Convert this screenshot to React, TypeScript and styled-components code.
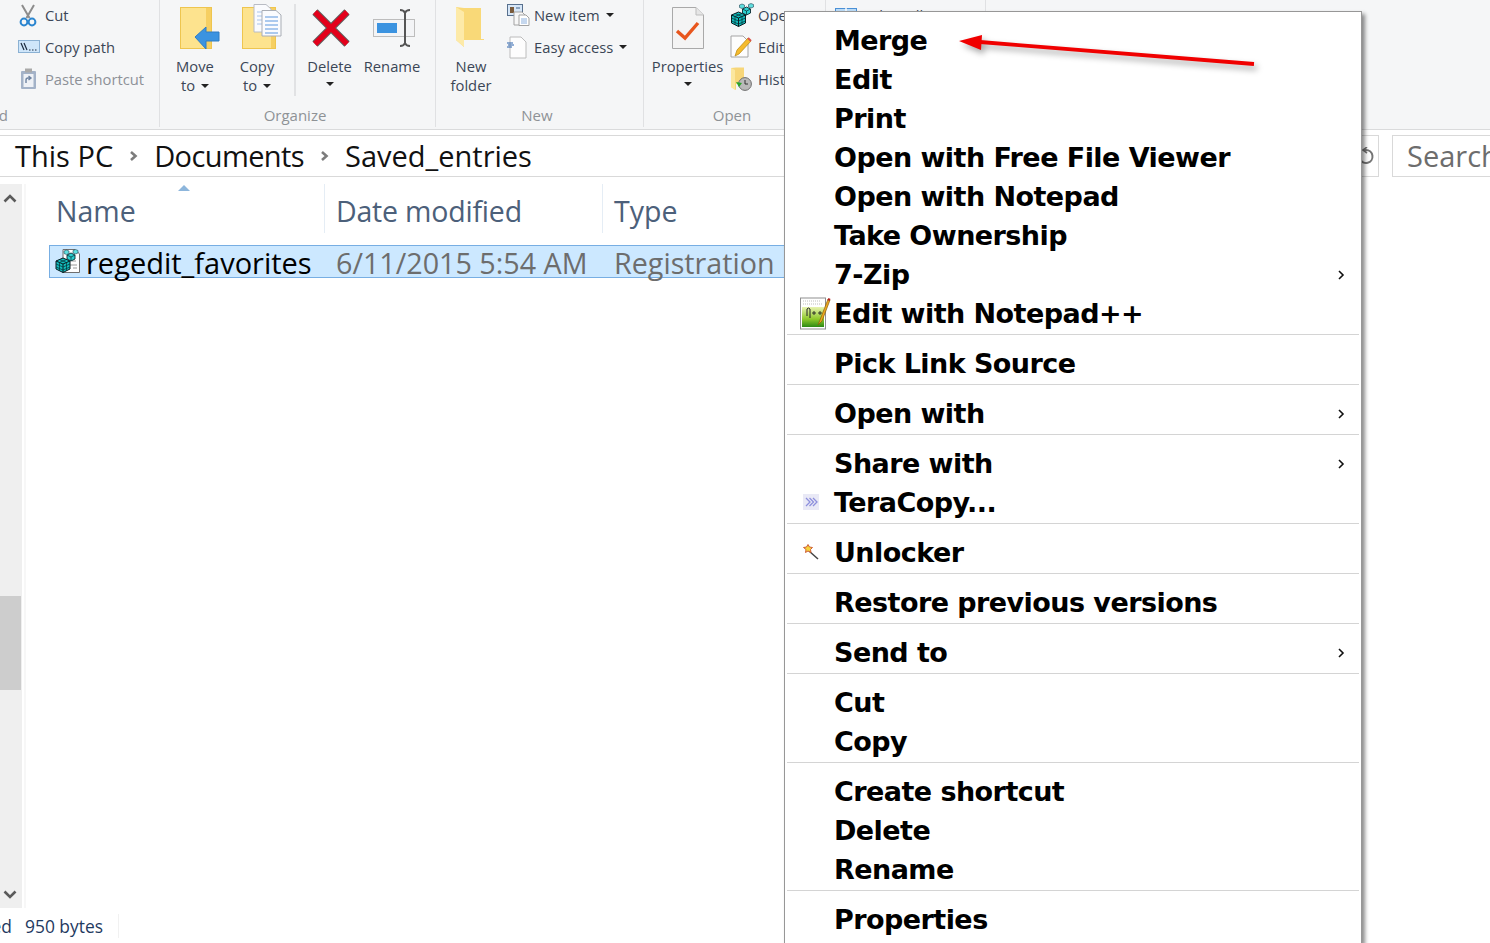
import React from 'react';
import styled, { createGlobalStyle } from 'styled-components';

const GlobalStyle = createGlobalStyle`
  html, body {
    margin: 0;
    padding: 0;
    background: #fff;
    overflow: hidden;
  }
  * {
    box-sizing: border-box;
  }
`;

const Window = styled.div`
  position: relative;
  width: 1490px;
  height: 943px;
  display: flex;
  flex-direction: column;
  overflow: hidden;
  background: #fff;
  font-family: 'Open Sans', 'Noto Sans', sans-serif;
`;

/* ribbon */

const Ribbon = styled.div`
  height: 130px;
  flex: none;
  display: flex;
  background: #f5f6f7;
  border-bottom: 1px solid #dadbdc;
  font-size: 14.75px;
  color: #3b4656;
`;

const Group = styled.div<{ $width: number }>`
  width: ${(p) => p.$width}px;
  height: 127px;
  flex: none;
  display: flex;
  flex-direction: column;
  border-right: 1px solid #e0e1e3;
`;

const GroupBody = styled.div<{ $pad?: number }>`
  height: 105px;
  display: flex;
  padding-left: ${(p) => p.$pad ?? 0}px;
`;

const GroupLabel = styled.div`
  height: 22px;
  display: flex;
  justify-content: center;
  padding-right: 5px;
  overflow: hidden;
  white-space: nowrap;
  color: #8e9296;
  font-size: 15px;
  line-height: 20px;
`;

const ClippedLabel = styled(GroupLabel)`
  justify-content: flex-end;
  padding-right: 151px;
`;

const LargeButton = styled.div<{ $width: number }>`
  width: ${(p) => p.$width}px;
  flex: none;
  display: flex;
  flex-direction: column;
  align-items: center;
  line-height: 19px;
  text-align: center;
`;

const LargeIcon = styled.div<{ $top: number; $shift?: number }>`
  height: 57px;
  display: flex;
  align-items: flex-start;
  padding-top: ${(p) => p.$top}px;
  margin-left: ${(p) => (p.$shift ?? 0) * 2}px;
  svg {
    display: block;
  }
`;

const Caret = styled.span`
  display: inline-block;
  width: 0;
  height: 0;
  margin-left: 6px;
  vertical-align: 3px;
  border-left: 4px solid transparent;
  border-right: 4px solid transparent;
  border-top: 4px solid #222;
`;

const BlockCaret = styled(Caret)`
  display: block;
  margin: 6px auto 0;
`;

const VSep = styled.div`
  width: 2px;
  height: 92px;
  margin: 4px 6px 0;
  flex: none;
  background: #e1e2e4;
`;

const SmallList = styled.div<{ $gap?: number }>`
  display: flex;
  flex-direction: column;
  margin: -1px 0 0 ${(p) => p.$gap ?? 0}px;
`;

const SmallRow = styled.div<{ $muted?: boolean }>`
  height: 32px;
  display: flex;
  align-items: center;
  white-space: nowrap;
  color: ${(p) => (p.$muted ? '#8d9197' : 'inherit')};
`;

const SmallIcon = styled.div<{ $width: number }>`
  width: ${(p) => p.$width}px;
  flex: none;
  display: flex;
  align-items: center;
  svg {
    display: block;
  }
`;

/* address bar */

const AddressRow = styled.div`
  height: 42px;
  margin-top: 5px;
  flex: none;
  display: flex;
  gap: 13px;
`;

const Breadcrumb = styled.div`
  width: 1379px;
  flex: none;
  display: flex;
  align-items: center;
  padding: 0 4px 1px 15px;
  border: 1px solid #d9d9d9;
  border-left: none;
  font-size: 29px;
  color: #111;
`;

const Crumb = styled.span<{ $tight?: boolean }>`
  white-space: nowrap;
  letter-spacing: ${(p) => (p.$tight ? '-0.6px' : '0')};
`;

const CrumbChevron = styled.svg`
  width: 9px;
  height: 14px;
  margin: 0 16px;
  flex: none;
`;

const RefreshGlyph = styled.svg`
  width: 16px;
  height: 18px;
  margin-left: auto;
  flex: none;
`;

const SearchBox = styled.div`
  flex: 1;
  display: flex;
  align-items: center;
  padding: 0 0 1px 14px;
  overflow: hidden;
  white-space: nowrap;
  border: 1px solid #d9d9d9;
  border-right: none;
  font-size: 29px;
  color: #6d6d6d;
`;

/* file list */

const Body = styled.div`
  flex: 1;
  min-height: 0;
  margin-top: 7px;
  display: flex;
`;

const Scrollbar = styled.div`
  width: 22px;
  flex: none;
  display: flex;
  flex-direction: column;
  background: #efefef;
`;

const ScrollButton = styled.div`
  height: 28px;
  flex: none;
  display: flex;
  align-items: center;
  justify-content: center;
  padding-right: 2px;
`;

const ScrollTrack = styled.div`
  flex: 1;
`;

const ScrollThumb = styled.div<{ $top: number; $height: number }>`
  width: 21px;
  height: ${(p) => p.$height}px;
  margin-top: ${(p) => p.$top}px;
  background: #cdcdcd;
`;

const Gutter = styled.div`
  width: 4px;
  flex: none;
  border-left: 2px solid #fff;
  background: #f7f7f7;
`;

const FileList = styled.div`
  flex: 1;
  padding-left: 23px;
`;

const columns = `276px 278px 1fr`;

const HeaderRow = styled.div`
  height: 48px;
  display: grid;
  grid-template-columns: ${columns};
  font-size: 28.5px;
  color: #4c607a;
`;

const HeaderCell = styled.div<{ $pad: number; $divider?: boolean; $tight?: boolean }>`
  position: relative;
  padding: 5px 0 0 ${(p) => p.$pad}px;
  line-height: 44px;
  white-space: nowrap;
  letter-spacing: ${(p) => (p.$tight ? '-0.2px' : '0')};
  border-right: ${(p) => (p.$divider ? '1px solid #e5edf5' : 'none')};
`;

const SortMark = styled.svg`
  position: absolute;
  top: 1px;
  left: 129px;
  width: 12px;
  height: 6px;
`;

const FileRow = styled.div`
  width: 860px;
  height: 33px;
  margin-top: 13px;
  padding-top: 2px;
  display: grid;
  grid-template-columns: ${columns};
  align-items: center;
  background: #cce8ff;
  border: 1px solid #77aee3;
  font-size: 29px;
  line-height: 29px;
  white-space: nowrap;
  color: #6d6d6d;
`;

const FileName = styled.div`
  display: flex;
  align-items: center;
  gap: 6px;
  padding-left: 5px;
  color: #000;
  svg {
    margin-top: -4px;
  }
`;

const FileCell = styled.div`
  padding-left: 10px;
  font-size: 28.7px;
`;

const StatusBar = styled.div`
  height: 35px;
  flex: none;
  display: flex;
  align-items: center;
  font-size: 17.4px;
  color: #1f3a5f;
`;

const StatusClip = styled.span`
  width: 12px;
  overflow: hidden;
  direction: rtl;
`;

const StatusSize = styled.span`
  width: 107px;
  padding-left: 13px;
  border-right: 1px solid #f1f1f1;
`;

/* context menu */

const Menu = styled.div`
  position: absolute;
  left: 784px;
  top: 11px;
  width: 578px;
  height: 932px;
  padding: 9px 2px 0 1px;
  background: #fff;
  border: 1px solid #979797;
  border-bottom: none;
  box-shadow: 3px 3px 4px rgba(0, 0, 0, 0.45);
  font-family: 'DejaVu Sans', Verdana, sans-serif;
  font-weight: 700;
  font-size: 27px;
  letter-spacing: -0.55px;
  color: #000;
`;

const MenuRow = styled.div`
  height: 39px;
  display: flex;
  align-items: center;
  padding-right: 14px;
  white-space: nowrap;
`;

const MenuIcon = styled.div`
  width: 48px;
  flex: none;
  display: flex;
  align-items: center;
  padding-left: 14px;
  svg {
    display: block;
  }
`;

const MenuGlyph = styled.svg`
  width: 16px;
  height: 16px;
  margin: -2px 0 0 3px;
`;

const MenuChevron = styled.svg`
  width: 8px;
  height: 10px;
  margin-left: auto;
  flex: none;
`;

const MenuSeparator = styled.div`
  height: 1px;
  margin: 1px 0 9px 1px;
  background: #d4d4d4;
`;

const RedArrow = styled.svg`
  position: absolute;
  left: 950px;
  top: 28px;
  width: 320px;
  height: 50px;
  filter: drop-shadow(3px 4px 3px rgba(0, 0, 0, 0.35));
`;

/* icons */

const Scissors = () => (
  <svg width="19" height="23" viewBox="-2 0 19 23">
    <path d="M2 1 L9.5 14 M14 1 L6.5 14" stroke="#8c8c8c" strokeWidth="2" fill="none" />
    <circle cx="4" cy="18" r="3.4" stroke="#2c86d0" strokeWidth="2" fill="none" />
    <circle cx="12" cy="18" r="3.4" stroke="#2c86d0" strokeWidth="2" fill="none" />
  </svg>
);

const CopyPathIcon = () => (
  <svg width="22" height="14" viewBox="0 0 22 14">
    <rect x="0.5" y="0.5" width="21" height="12" fill="#cfe6fa" stroke="#8bb1d3" />
    <path d="M3 3 L6 10 M6 3 L9 10" stroke="#1c2b3f" strokeWidth="1.2" />
    <path d="M11 10 h1.5 M14 10 h1.5 M17 10 h1.5" stroke="#1c2b3f" strokeWidth="1.2" />
  </svg>
);

const PasteIcon = () => (
  <svg width="19" height="22" viewBox="-2 0 19 22">
    <rect x="1" y="3" width="15" height="18" rx="1" fill="#a3b2c8" />
    <rect x="5" y="0.5" width="7" height="4" fill="#a9a9a9" />
    <rect x="3.5" y="6" width="10" height="13" fill="#eef1f6" />
    <path d="M6 15 V12 q0 -2 2 -2 H10 M8.5 8 L11 10 L8.5 12" stroke="#6f84a2" strokeWidth="1.4" fill="none" />
  </svg>
);

const MoveToIcon = () => (
  <svg width="40" height="43" viewBox="0 0 40 43">
    <rect x="0.5" y="0.5" width="31" height="41" fill="#fde38e" stroke="#eec54f" />
    <rect x="26" y="1" width="5" height="40" fill="#f6cf62" />
    <path d="M15 30 L26 20 V25 H39 V34 H26 V42 Z" fill="#3b93e0" stroke="#2f7dc4" />
  </svg>
);

const CopyToIcon = () => (
  <svg width="40" height="46" viewBox="0 0 40 46">
    <rect x="0.5" y="3.5" width="33" height="41" fill="#fde38e" stroke="#eec54f" />
    <rect x="29" y="4" width="4" height="40" fill="#f6cf62" />
    <path d="M12 0.5 H24 L29 5 V28 H12 Z" fill="#fafbfe" stroke="#b9bcc4" />
    <path d="M15 8 H26 M15 12 H26 M15 16 H26 M15 20 H26" stroke="#a8c4ea" />
    <path d="M20 6.5 H34 L39 11 V32 H20 Z" fill="#fafbfe" stroke="#a9adb5" />
    <path d="M23 13 H36 M23 17 H36 M23 21 H36 M23 25 H36 M23 29 H36" stroke="#5d97de" />
  </svg>
);

const DeleteIcon = () => (
  <svg width="38" height="38" viewBox="0 0 38 38">
    <path d="M3 3 L35 35 M35 3 L3 35" stroke="#5f5f5f" strokeWidth="7.5" />
    <path d="M3 3 L35 35 M35 3 L3 35" stroke="#e3001b" strokeWidth="5.5" />
  </svg>
);

const RenameIcon = () => (
  <svg width="42" height="38" viewBox="0 0 42 38">
    <rect x="0.5" y="10.5" width="41" height="17" fill="#f3f4f6" stroke="#bdbdbd" />
    <rect x="4" y="14" width="20" height="10" fill="#3b93e0" />
    <path d="M27 1 q4 0 5 3 V34 q-1 3 -5 3 M37 1 q-4 0 -5 3 M37 37 q-4 0 -5 -3" stroke="#555" strokeWidth="2" fill="none" />
  </svg>
);

const NewFolderIcon = () => (
  <svg width="28" height="40" viewBox="0 0 28 40">
    <path d="M0 0 L8 1 H25 V32 H28 V33 H8 V40 L0 33 Z" fill="#f9d978" />
    <path d="M0 0 L8 5 V40 L0 33 Z" fill="#fdeaa8" />
  </svg>
);

const NewItemIcon = () => (
  <svg width="23" height="22" viewBox="0 0 23 22">
    <rect x="0.5" y="0.5" width="15" height="11" fill="#d6e6f7" stroke="#58708e" />
    <rect x="3" y="3" width="4" height="6" fill="#7a5b3c" />
    <path d="M9 4 H13" stroke="#40628a" />
    <path d="M7 8 H15 L18 11 V21 H7 Z" fill="#f7f7f7" stroke="#a3a3a3" />
    <path d="M12 11 H19 L22 14 V21.5 H12 Z" fill="#fff" stroke="#a3a3a3" />
    <path d="M14 15 H20 M14 17 H20 M14 19 H20" stroke="#8cb0de" />
  </svg>
);

const EasyAccessIcon = () => (
  <svg width="20" height="23" viewBox="0 0 20 23">
    <path d="M3 1 H14 L19 6 V22 H3 Z" fill="#fdfdfd" stroke="#bcbcbc" />
    <path d="M0 7 H6 M1 9 H7 M0 11 H5" stroke="#2a62ad" />
  </svg>
);

const PropertiesIcon = () => (
  <svg width="32" height="42" viewBox="0 0 32 42">
    <path d="M0.5 0.5 H24 L31.5 8 V41.5 H0.5 Z" fill="#f4f4f4" stroke="#a9a9a9" />
    <path d="M24 0.5 V8 H31.5" fill="#e6e6e6" stroke="#bdbdbd" />
    <path d="M5 24 L13 31 L26 16" stroke="#e8561d" strokeWidth="3.4" fill="none" />
  </svg>
);

const cubeArt = (
  <>
    <path d="M1 12 L8 9 L15 12 V20 L8 23.5 L1 20 Z" fill="#12bcbc" stroke="#0a1a1f" strokeWidth="1" />
    <path d="M1 12 L8 15 L15 12 M8 15 V23.5" stroke="#0a1a1f" strokeWidth="1" fill="none" />
    <path d="M1 15 L8 18 L15 15 M1 18 L8 21 L15 18 M4.5 13.5 V22 M11.5 13.5 V22 M4.5 10.5 L11.5 13.5 M11.5 10.5 L4.5 13.5" stroke="#063b40" strokeWidth="0.8" fill="none" />
    <path d="M12 6 L16 4 L20 6 V10 L16 12 L12 10 Z" fill="#2bcfcf" stroke="#0a2a30" strokeWidth="0.9" />
    <path d="M12 6 L16 8 L20 6 M16 8 V12" stroke="#0a2a30" strokeWidth="0.7" fill="none" />
    <path d="M9 2 L11.5 1 L14 2 V4.5 L11.5 5.5 L9 4.5 Z" fill="#5fdede" stroke="#245" strokeWidth="0.6" />
    <path d="M18 1.5 L20.5 0.5 L23 1.5 V4 L20.5 5 L18 4 Z" fill="#5fdede" stroke="#245" strokeWidth="0.6" />
  </>
);

const RegistryCubes = () => (
  <svg width="25" height="24" viewBox="0 0 24 24">{cubeArt}</svg>
);

const RegFileIcon = () => (
  <svg width="25" height="24" viewBox="0 0 25 24">
    <path d="M8 0.5 H20 L24.5 5 V23.5 H8 Z" fill="#fff" stroke="#6f6f6f" />
    <path d="M17 12 H21 M15 16 H22 M18 19 H22" stroke="#9a9a9a" />
    {cubeArt}
  </svg>
);

const EditPageIcon = () => (
  <svg width="22" height="24" viewBox="0 0 22 24">
    <path d="M1 1 H13 L18 6 V22 H1 Z" fill="#fdfdfd" stroke="#a5a5a5" />
    <path d="M5 21 L7 15 L18 3 L21 6 L9 19 Z" fill="#f5bb2d" stroke="#b8860b" strokeWidth="0.7" />
    <path d="M18 3 L21 6" stroke="#d9534f" strokeWidth="2" />
  </svg>
);

const HistoryIcon = () => (
  <svg width="22" height="24" viewBox="0 0 22 24">
    <path d="M1 1 L6 0.5 H14 V17 H6 V23 L1 20 Z" fill="#f7d679" />
    <path d="M1 1 L5 3 V23 L1 20 Z" fill="#fbe79f" />
    <circle cx="15" cy="17" r="6.4" fill="#b9b9b9" stroke="#6e6e6e" />
    <path d="M15 13 V17 H18" stroke="#333" fill="none" />
    <path d="M6 15 L9 20 L12 16 Z" fill="#2aa52a" />
  </svg>
);

const SelectAllIcon = () => (
  <svg width="22" height="14" viewBox="0 0 22 14">
    <rect x="0.5" y="0.5" width="21" height="13" fill="#bcdcf7" stroke="#4a90d6" />
    <path d="M11 0 V14" stroke="#fff" strokeWidth="1.4" />
  </svg>
);

const NotepadPlusIcon = () => (
  <svg width="31" height="33" viewBox="0 0 31 33">
    <defs>
      <linearGradient id="nppGreen" x1="0" y1="0" x2="0" y2="1">
        <stop offset="0" stopColor="#e8f3b0" />
        <stop offset="0.6" stopColor="#8fc92b" />
        <stop offset="1" stopColor="#2c8a14" />
      </linearGradient>
    </defs>
    <rect x="0.5" y="1" width="25" height="31" fill="#fff" stroke="#8f8f8f" />
    <path d="M3 4 H21 M3 7 H23" stroke="#bdbdbd" strokeDasharray="1 1" />
    <rect x="2" y="10" width="22" height="20" fill="url(#nppGreen)" />
    <path d="M7 19 V12 q1.5 -2 3 0 V21" stroke="#222" strokeWidth="1" fill="none" />
    <path d="M12 16 h4 M14 14 v4 M18 16 h4 M20 14 v4" stroke="#222" strokeWidth="0.9" />
    <path d="M18 28 L20 23 L28 2 L30 3 L22 24 Z" fill="#eda81f" stroke="#8a5d0a" strokeWidth="0.7" />
    <path d="M28 2 L30 3" stroke="#b32020" strokeWidth="2.4" />
  </svg>
);

const TeraCopyIcon = () => (
  <MenuGlyph viewBox="0 0 16 16">
    <rect width="16" height="16" fill="#e9e9f6" />
    <path d="M3 4 L7 8 L3 12 M6.5 4 L10.5 8 L6.5 12 M10 4 L14 8 L10 12" stroke="#8d8fdc" strokeWidth="1.3" fill="none" />
  </MenuGlyph>
);

const UnlockerIcon = () => (
  <MenuGlyph viewBox="0 0 16 16">
    <path d="M6 7 L15 15" stroke="#444" strokeWidth="1.5" />
    <path d="M5 0.5 L6.5 3 L9.5 3.5 L7.5 5.5 L8 8.5 L5 7 L2.5 8.5 L3 5.5 L0.5 3.5 L3.5 3 Z" fill="#f6d33c" stroke="#c8502c" strokeWidth="0.9" />
  </MenuGlyph>
);

const Chevron = ({ up }: { up?: boolean }) => (
  <svg width="14" height="9" viewBox="0 0 14 9">
    <path d={up ? 'M1.5 7.5 L7 2 L12.5 7.5' : 'M1.5 1.5 L7 7 L12.5 1.5'} stroke="#5a5a5a" strokeWidth="2.6" fill="none" />
  </svg>
);

const SubmenuChevron = () => (
  <MenuChevron viewBox="0 0 8 10">
    <path d="M2 1 L6 5 L2 9" stroke="#111" strokeWidth="1.6" fill="none" />
  </MenuChevron>
);

const BreadcrumbArrow = () => (
  <CrumbChevron viewBox="0 0 9 14">
    <path d="M2 3 L6.5 7 L2 11" stroke="#7c7c7c" strokeWidth="2.6" fill="none" />
  </CrumbChevron>
);

type MenuEntry = {
  label: string;
  icon?: React.ReactNode;
  submenu?: boolean;
};

const menuSections: MenuEntry[][] = [
  [
    { label: 'Merge' },
    { label: 'Edit' },
    { label: 'Print' },
    { label: 'Open with Free File Viewer' },
    { label: 'Open with Notepad' },
    { label: 'Take Ownership' },
    { label: '7-Zip', submenu: true },
    { label: 'Edit with Notepad++', icon: <NotepadPlusIcon /> },
  ],
  [{ label: 'Pick Link Source' }],
  [{ label: 'Open with', submenu: true }],
  [
    { label: 'Share with', submenu: true },
    { label: 'TeraCopy...', icon: <TeraCopyIcon /> },
  ],
  [{ label: 'Unlocker', icon: <UnlockerIcon /> }],
  [{ label: 'Restore previous versions' }],
  [{ label: 'Send to', submenu: true }],
  [{ label: 'Cut' }, { label: 'Copy' }],
  [{ label: 'Create shortcut' }, { label: 'Delete' }, { label: 'Rename' }],
  [{ label: 'Properties' }],
];

const App: React.FC = () => {
  return (
    <Window>
      <GlobalStyle />
      <Ribbon>
        <Group $width={160}>
          <GroupBody $pad={18}>
            <SmallList>
              <SmallRow>
                <SmallIcon $width={27}><Scissors /></SmallIcon>Cut
              </SmallRow>
              <SmallRow>
                <SmallIcon $width={27}><CopyPathIcon /></SmallIcon>Copy path
              </SmallRow>
              <SmallRow $muted>
                <SmallIcon $width={27}><PasteIcon /></SmallIcon>Paste shortcut
              </SmallRow>
            </SmallList>
          </GroupBody>
          <ClippedLabel>Clipboard</ClippedLabel>
        </Group>

        <Group $width={276}>
          <GroupBody $pad={4}>
            <LargeButton $width={62}>
              <LargeIcon $top={7} $shift={5}><MoveToIcon /></LargeIcon>
              <span>Move</span>
              <span>to<Caret /></span>
            </LargeButton>
            <LargeButton $width={62}>
              <LargeIcon $top={4} $shift={5}><CopyToIcon /></LargeIcon>
              <span>Copy</span>
              <span>to<Caret /></span>
            </LargeButton>
            <VSep />
            <LargeButton $width={55}>
              <LargeIcon $top={9} $shift={1}><DeleteIcon /></LargeIcon>
              <span>Delete</span>
              <BlockCaret />
            </LargeButton>
            <LargeButton $width={70}>
              <LargeIcon $top={9} $shift={2}><RenameIcon /></LargeIcon>
              <span>Rename</span>
            </LargeButton>
          </GroupBody>
          <GroupLabel>Organize</GroupLabel>
        </Group>

        <Group $width={208}>
          <GroupBody $pad={5}>
            <LargeButton $width={60}>
              <LargeIcon $top={7} $shift={-1}><NewFolderIcon /></LargeIcon>
              <span>New</span>
              <span>folder</span>
            </LargeButton>
            <SmallList $gap={6}>
              <SmallRow>
                <SmallIcon $width={27}><NewItemIcon /></SmallIcon>New item<Caret />
              </SmallRow>
              <SmallRow>
                <SmallIcon $width={27}><EasyAccessIcon /></SmallIcon>Easy access<Caret />
              </SmallRow>
            </SmallList>
          </GroupBody>
          <GroupLabel>New</GroupLabel>
        </Group>

        <Group $width={182}>
          <GroupBody $pad={6}>
            <LargeButton $width={75}>
              <LargeIcon $top={7}><PropertiesIcon /></LargeIcon>
              <span>Properties</span>
              <BlockCaret />
            </LargeButton>
            <SmallList $gap={5}>
              <SmallRow>
                <SmallIcon $width={28}><RegistryCubes /></SmallIcon>Open
              </SmallRow>
              <SmallRow>
                <SmallIcon $width={28}><EditPageIcon /></SmallIcon>Edit
              </SmallRow>
              <SmallRow>
                <SmallIcon $width={28}><HistoryIcon /></SmallIcon>History
              </SmallRow>
            </SmallList>
          </GroupBody>
          <GroupLabel>Open</GroupLabel>
        </Group>

        <Group $width={160}>
          <GroupBody $pad={9}>
            <SmallList>
              <SmallRow>
                <SmallIcon $width={28}><SelectAllIcon /></SmallIcon>Select all
              </SmallRow>
            </SmallList>
          </GroupBody>
        </Group>
      </Ribbon>

      <AddressRow>
        <Breadcrumb>
          <Crumb>This PC</Crumb>
          <BreadcrumbArrow />
          <Crumb $tight>Documents</Crumb>
          <BreadcrumbArrow />
          <Crumb>Saved_entries</Crumb>
          <RefreshGlyph viewBox="0 0 16 18">
            <path d="M6 3 H8 A6.5 6.5 0 1 1 2 12" stroke="#757575" strokeWidth="2" fill="none" />
            <path d="M9 0 L5 3 L9 6" stroke="#757575" strokeWidth="1.6" fill="none" />
          </RefreshGlyph>
        </Breadcrumb>
        <SearchBox>Search Saved_entries</SearchBox>
      </AddressRow>

      <Body>
        <Scrollbar>
          <ScrollButton><Chevron up /></ScrollButton>
          <ScrollTrack>
            <ScrollThumb $top={384} $height={94} />
          </ScrollTrack>
          <ScrollButton><Chevron /></ScrollButton>
        </Scrollbar>
        <Gutter />
        <FileList>
          <HeaderRow>
            <HeaderCell $pad={7} $divider>
              Name
              <SortMark viewBox="0 0 12 6">
                <path d="M0 6 L6 0 L12 6 Z" fill="#8db6dc" />
              </SortMark>
            </HeaderCell>
            <HeaderCell $pad={11} $divider $tight>Date modified</HeaderCell>
            <HeaderCell $pad={11}>Type</HeaderCell>
          </HeaderRow>
          <FileRow>
            <FileName>
              <RegFileIcon />
              regedit_favorites
            </FileName>
            <FileCell>6/11/2015 5:54 AM</FileCell>
            <FileCell>Registration Entries</FileCell>
          </FileRow>
        </FileList>
      </Body>

      <StatusBar>
        <StatusClip>selected</StatusClip>
        <StatusSize>950 bytes</StatusSize>
      </StatusBar>

      <Menu>
        {menuSections.map((section, i) => (
          <React.Fragment key={i}>
            {i > 0 && <MenuSeparator />}
            {section.map((item) => (
              <MenuRow key={item.label}>
                <MenuIcon>{item.icon}</MenuIcon>
                {item.label}
                {item.submenu && <SubmenuChevron />}
              </MenuRow>
            ))}
          </React.Fragment>
        ))}
      </Menu>

      <RedArrow viewBox="0 0 320 50">
        <path d="M304 36 L30 14" stroke="#f00000" strokeWidth="3.8" fill="none" />
        <path d="M9 13 L32 7 L31 22 Z" fill="#f00000" />
      </RedArrow>
    </Window>
  );
};

export default App;
